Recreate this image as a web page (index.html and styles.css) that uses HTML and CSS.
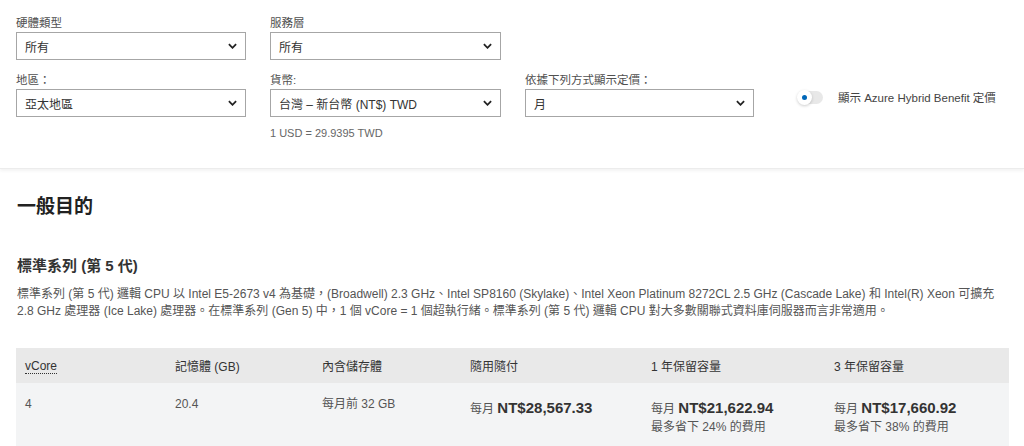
FILE: index.html
```html
<!DOCTYPE html>
<html lang="zh-Hant">
<head>
<meta charset="utf-8">
<title>定價</title>
<link rel="stylesheet" href="styles.css">
</head>
<body>
<section class="filters">
  <div class="filter-grid">
    <div class="field">
      <div class="label">硬體類型</div>
      <div class="select"><span>所有</span><svg class="chev" viewBox="0 0 10 6"><path d="M1 1l4 4 4-4"/></svg></div>
    </div>
    <div class="field">
      <div class="label">服務層</div>
      <div class="select"><span>所有</span><svg class="chev" viewBox="0 0 10 6"><path d="M1 1l4 4 4-4"/></svg></div>
    </div>
    <div class="field span-rest"></div>
    <div class="field">
      <div class="label">地區：</div>
      <div class="select"><span>亞太地區</span><svg class="chev" viewBox="0 0 10 6"><path d="M1 1l4 4 4-4"/></svg></div>
    </div>
    <div class="field">
      <div class="label">貨幣:</div>
      <div class="select"><span>台灣 – 新台幣 (NT$) TWD</span><svg class="chev" viewBox="0 0 10 6"><path d="M1 1l4 4 4-4"/></svg></div>
      <div class="rate">1 USD = 29.9395 TWD</div>
    </div>
    <div class="field">
      <div class="label">依據下列方式顯示定價：</div>
      <div class="select"><span>月</span><svg class="chev" viewBox="0 0 10 6"><path d="M1 1l4 4 4-4"/></svg></div>
    </div>
    <div class="toggle-field">
      <span class="toggle"><span class="knob"><span class="dot"></span></span></span>
      <span class="toggle-label">顯示 Azure Hybrid Benefit 定價</span>
    </div>
  </div>
</section>

<main class="content">
  <h1 class="title">一般目的</h1>
  <h2 class="subtitle">標準系列 (第 5 代)</h2>
  <p class="desc">標準系列 (第 5 代) 邏輯 CPU 以 Intel E5-2673 v4 為基礎，(Broadwell) 2.3 GHz、Intel SP8160 (Skylake)、Intel Xeon Platinum 8272CL 2.5 GHz (Cascade Lake) 和 Intel(R) Xeon 可擴充 2.8 GHz 處理器 (Ice Lake) 處理器。在標準系列 (Gen 5) 中，1 個 vCore = 1 個超執行緒。標準系列 (第 5 代) 邏輯 CPU 對大多數關聯式資料庫伺服器而言非常適用。</p>

  <div class="table">
    <div class="row head">
      <div class="cell c1"><abbr>vCore</abbr></div>
      <div class="cell c2">記憶體 (GB)</div>
      <div class="cell c3">內含儲存體</div>
      <div class="cell c4">隨用隨付</div>
      <div class="cell c5">1 年保留容量</div>
      <div class="cell c6">3 年保留容量</div>
    </div>
    <div class="row body">
      <div class="cell c1 plain">4</div>
      <div class="cell c2 plain">20.4</div>
      <div class="cell c3 plain">每月前 32 GB</div>
      <div class="cell c4 price"><span class="per">每月</span> <b>NT$28,567.33</b></div>
      <div class="cell c5 price"><span class="per">每月</span> <b>NT$21,622.94</b><div class="save">最多省下 24% 的費用</div></div>
      <div class="cell c6 price"><span class="per">每月</span> <b>NT$17,660.92</b><div class="save">最多省下 38% 的費用</div></div>
    </div>
  </div>
</main>
</body>
</html>
```

FILE: styles.css
```css
* { box-sizing: border-box; }

body {
  margin: 0;
  background: #fff;
  color: #333;
  font-family: "Segoe UI", "Liberation Sans", "Noto Sans CJK TC", sans-serif;
  overflow: hidden;
}

.filters {
  height: 169px;
  padding: 15px 16px 0;
  border-bottom: 1px solid #ececec;
  box-shadow: 0 2px 3px rgba(0, 0, 0, 0.05);
}

.filter-grid {
  display: grid;
  grid-template-columns: 230px 231px 229px auto;
  column-gap: 24px;
  row-gap: 12px;
}

.span-rest { grid-column: span 2; }

.label {
  font-size: 11.5px;
  line-height: 17px;
  color: #505050;
}

.select {
  height: 28px;
  border: 1px solid #a6a6a6;
  background: #fff;
  display: flex;
  align-items: center;
  justify-content: space-between;
  padding: 0 8px 0 8px;
  font-size: 12px;
  color: #333;
}

.chev {
  width: 9px;
  height: 6px;
  fill: none;
  stroke: #222;
  stroke-width: 2;
}

.rate {
  margin-top: 9px;
  font-size: 11px;
  line-height: 14px;
  color: #666;
}

.toggle-field {
  display: flex;
  align-items: center;
  padding-left: 20px;
  margin-top: 18px;
  height: 14px;
}

.toggle {
  position: relative;
  width: 25px;
  height: 13px;
  border-radius: 7px;
  background: #e8e8e8;
  margin-right: 15px;
}

.knob {
  position: absolute;
  left: -1px;
  top: -1px;
  width: 15px;
  height: 15px;
  border-radius: 50%;
  background: #fff;
  box-shadow: 0 1px 3px rgba(0, 0, 0, 0.2);
  display: flex;
  align-items: center;
  justify-content: center;
}

.dot {
  width: 5px;
  height: 5px;
  border-radius: 50%;
  background: #0067b8;
}

.toggle-label {
  font-size: 11.5px;
  color: #444;
}

.content {
  padding: 0 16px;
}

.title {
  margin: 25px 0 0 1px;
  font-size: 19px;
  line-height: 26px;
  font-weight: 600;
  color: #222;
}

.subtitle {
  margin: 36px 0 0 1px;
  font-size: 15px;
  line-height: 20px;
  font-weight: 600;
  color: #333;
}

.desc {
  margin: 10px 0 0 1px;
  font-size: 12px;
  line-height: 17px;
  color: #555;
  max-width: 985px;
}

.table {
  margin-top: 28px;
  width: 993px;
}

.row {
  display: flex;
}

.row.head {
  background: #e9e9e9;
  height: 35px;
  align-items: center;
  font-size: 12px;
  color: #333;
}

.row.body {
  background: #f3f4f5;
  height: 80px;
  align-items: flex-start;
  padding-top: 13px;
  font-size: 12px;
}

.cell { padding-left: 9px; }
.c1 { width: 150px; }
.c2 { width: 147px; }
.c3 { width: 148px; }
.c4 { width: 181px; }
.c5 { width: 183px; }
.c6 { flex: 1; }

abbr {
  text-decoration: none;
  border-bottom: 1px dotted #333;
}

.plain {
  color: #555;
  line-height: 16px;
}

.price {
  line-height: 20px;
  margin-top: 2px;
}

.per { color: #555; font-size: 12px; }

.price b {
  font-size: 15px;
  font-weight: 600;
  color: #333;
}

.save {
  font-size: 12px;
  line-height: 17px;
  color: #555;
}
```
